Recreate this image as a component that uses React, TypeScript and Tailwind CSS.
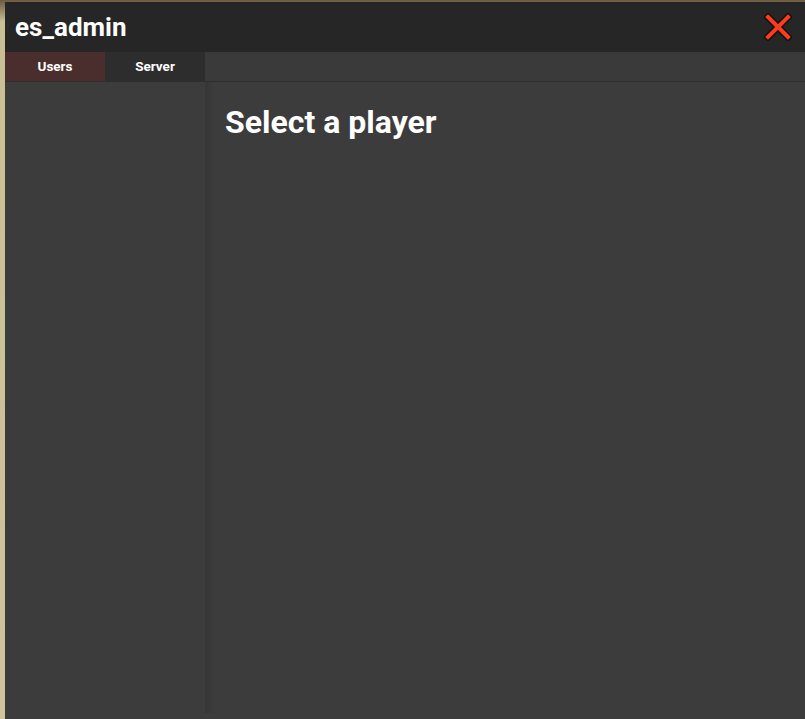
const tabs = [
  { label: "Users", active: true },
  { label: "Server", active: false },
];

function CloseIcon() {
  return (
    <svg width="28" height="28" viewBox="0 0 28 28">
      <g strokeLinecap="square">
        <path d="M4 4 L24 24 M24 4 L4 24" stroke="#111" strokeWidth="7" />
        <path d="M4 4 L24 24 M24 4 L4 24" stroke="#ff3b1c" strokeWidth="4" />
      </g>
    </svg>
  );
}

export default function App() {
  return (
    <div className="h-[719px] w-[805px] overflow-hidden bg-gradient-to-b from-[#6b5a40] from-0% via-[#c9bf95] via-[3%] to-[#cfc59c] pl-[5px] pt-[2px] font-['Roboto',sans-serif]">
      <div className="flex h-full flex-col bg-[#3c3c3c]">
        {/* Header */}
        <div className="flex h-[50px] shrink-0 items-center justify-between bg-[#262626] pl-[10px] pr-[13px]">
          <h1 className="text-[26px] font-bold text-white">es_admin</h1>
          <button className="flex items-center">
            <CloseIcon />
          </button>
        </div>

        {/* Tabs */}
        <div className="flex h-[30px] shrink-0 border-b border-[#2e2e2e] bg-[#3a3a3a]">
          {tabs.map((tab) => (
            <div
              key={tab.label}
              className={`flex w-[100px] items-center justify-center text-[13.5px] font-bold text-white ${
                tab.active ? "bg-[#4a2e2e]" : "bg-[#2d2d2d]"
              }`}
            >
              {tab.label}
            </div>
          ))}
        </div>

        {/* Body */}
        <div className="flex flex-1">
          <div className="w-[200px] shrink-0 bg-[#3c3c3c]" />
          <div className="flex flex-1 bg-[#3c3c3c] pb-[6px]">
            <div className="w-[10px] shrink-0 bg-gradient-to-r from-[#363636] to-[#3c3c3c]" />
            <div className="flex-1 px-[10px] pt-[20px]">
              <h2 className="text-[32px] font-bold leading-[40px] text-white">
                Select a player
              </h2>
            </div>
          </div>
        </div>
      </div>
    </div>
  );
}
